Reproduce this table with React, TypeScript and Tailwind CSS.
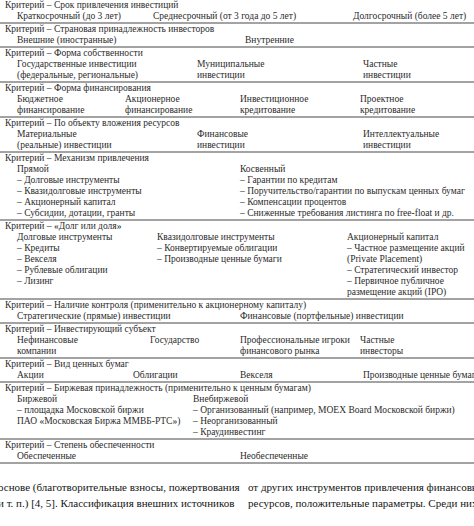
import { FC } from "react";

type Cell = { w: string; lines: string[] };
type Row = { title: string; cells: Cell[] };

const rows: Row[] = [
  {
    title: "Критерий – Срок привлечения инвестиций",
    cells: [
      { w: "w-[136px]", lines: ["Краткосрочный (до 3 лет)"] },
      { w: "w-[200px]", lines: ["Среднесрочный (от 3 года до 5 лет)"] },
      { w: "flex-1", lines: ["Долгосрочный (более 5 лет)"] },
    ],
  },
  {
    title: "Критерий – Страновая принадлежность инвесторов",
    cells: [
      { w: "w-[228px]", lines: ["Внешние (иностранные)"] },
      { w: "flex-1", lines: ["Внутренние"] },
    ],
  },
  {
    title: "Критерий – Форма собственности",
    cells: [
      { w: "w-[180px]", lines: ["Государственные инвестиции", "(федеральные, региональные)"] },
      { w: "w-[166px]", lines: ["Муниципальные", "инвестиции"] },
      { w: "flex-1", lines: ["Частные", "инвестиции"] },
    ],
  },
  {
    title: "Критерий – Форма финансирования",
    cells: [
      { w: "w-[108px]", lines: ["Бюджетное", "финансирование"] },
      { w: "w-[115px]", lines: ["Акционерное", "финансирование"] },
      { w: "w-[120px]", lines: ["Инвестиционное", "кредитование"] },
      { w: "flex-1", lines: ["Проектное", "кредитование"] },
    ],
  },
  {
    title: "Критерий – По объекту вложения ресурсов",
    cells: [
      { w: "w-[180px]", lines: ["Материальные", "(реальные) инвестиции"] },
      { w: "w-[166px]", lines: ["Финансовые", "инвестиции"] },
      { w: "flex-1", lines: ["Интеллектуальные", "инвестиции"] },
    ],
  },
  {
    title: "Критерий – Механизм привлечения",
    cells: [
      {
        w: "w-[223px]",
        lines: [
          "Прямой",
          "– Долговые инструменты",
          "– Квазидолговые инструменты",
          "– Акционерный капитал",
          "– Субсидии, дотации, гранты",
        ],
      },
      {
        w: "flex-1",
        lines: [
          "Косвенный",
          "– Гарантии по кредитам",
          "– Поручительство/гарантии по выпускам ценных бумаг",
          "– Компенсации процентов",
          "– Сниженные требования листинга по free-float и др.",
        ],
      },
    ],
  },
  {
    title: "Критерий – «Долг или доля»",
    cells: [
      {
        w: "w-[140px]",
        lines: [
          "Долговые инструменты",
          "– Кредиты",
          "– Векселя",
          "– Рублевые облигации",
          "– Лизинг",
        ],
      },
      {
        w: "w-[190px]",
        lines: [
          "Квазидолговые инструменты",
          "– Конвертируемые облигации",
          "– Производные ценные бумаги",
        ],
      },
      {
        w: "flex-1",
        lines: [
          "Акционерный капитал",
          "– Частное размещение акций",
          "(Private Placement)",
          "– Стратегический инвестор",
          "– Первичное публичное",
          "размещение акций (IPO)",
        ],
      },
    ],
  },
  {
    title: "Критерий – Наличие контроля (применительно к акционерному капиталу)",
    cells: [
      { w: "w-[223px]", lines: ["Стратегические (прямые) инвестиции"] },
      { w: "flex-1", lines: ["Финансовые (портфельные) инвестиции"] },
    ],
  },
  {
    title: "Критерий – Инвестирующий субъект",
    cells: [
      { w: "w-[133px]", lines: ["Нефинансовые", "компании"] },
      { w: "w-[90px]", lines: ["Государство"] },
      { w: "w-[120px]", lines: ["Профессиональные игроки", "финансового рынка"] },
      { w: "flex-1", lines: ["Частные", "инвесторы"] },
    ],
  },
  {
    title: "Критерий – Вид ценных бумаг",
    cells: [
      { w: "w-[116px]", lines: ["Акции"] },
      { w: "w-[107px]", lines: ["Облигации"] },
      { w: "w-[123px]", lines: ["Векселя"] },
      { w: "flex-1", lines: ["Производные ценные бумаги"] },
    ],
  },
  {
    title: "Критерий – Биржевая принадлежность (применительно к ценным бумагам)",
    cells: [
      {
        w: "w-[176px]",
        lines: [
          "Биржевой",
          "– площадка Московской биржи",
          "ПАО «Московская Биржа ММВБ-РТС»)",
        ],
      },
      {
        w: "flex-1",
        lines: [
          "Внебиржевой",
          "– Организованный (например, MOEX Board Московской биржи)",
          "– Неорганизованный",
          "– Краудинвестинг",
        ],
      },
    ],
  },
  {
    title: "Критерий – Степень обеспеченности",
    cells: [
      { w: "w-[223px]", lines: ["Обеспеченные"] },
      { w: "flex-1", lines: ["Необеспеченные"] },
    ],
  },
];

const TableRow: FC<{ row: Row }> = ({ row }) => (
  <div className="border-b-2 border-[#a3a3a3]">
    <div className="pl-[5px] whitespace-nowrap">{row.title}</div>
    <div className="flex flex-row pl-[17px]">
      {row.cells.map((cell, i) => (
        <div key={i} className={`${cell.w} shrink-0 whitespace-nowrap`}>
          {cell.lines.map((line, j) => (
            <div key={j}>{line}</div>
          ))}
        </div>
      ))}
    </div>
  </div>
);

export default function App() {
  return (
    <div className="w-[474px] h-[526px] overflow-hidden bg-white text-[#2b2b2b] font-['Liberation_Serif','Times_New_Roman',serif]">
      <div className="text-[9.5px] leading-[11px]">
        {rows.map((row, i) => (
          <TableRow key={i} row={row} />
        ))}
      </div>
      <div className="mt-[15px] flex flex-row text-[11px] leading-[16px] text-[#141414]">
        <div className="w-[230px] shrink-0 -ml-[2px]">
          <div className="text-justify [text-align-last:justify] whitespace-nowrap">
            основе (благотворительные взносы, пожертвования
          </div>
          <div className="text-justify [text-align-last:justify] whitespace-nowrap">
            и т. п.) [4, 5]. Классификация внешних источников
          </div>
        </div>
        <div className="ml-[20px] whitespace-nowrap">
          <div>от других инструментов привлечения финансовых</div>
          <div>ресурсов, положительные параметры. Среди них</div>
        </div>
      </div>
    </div>
  );
}
